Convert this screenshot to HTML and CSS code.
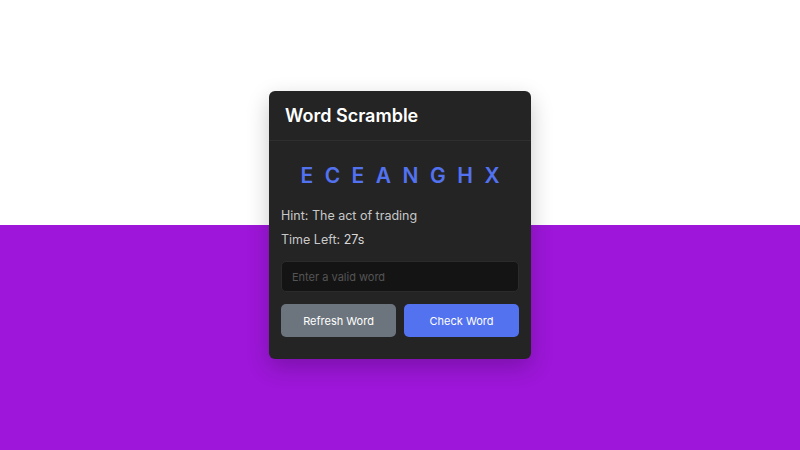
FILE: index.html
```html
<!DOCTYPE html>
<html>
<head>
<meta charset="utf-8">
<link rel="stylesheet" href="styles.css">
</head>
<body>
<div class="card">
  <h2 class="title">Word Scramble</h2>
  <div class="content">
    <p class="word">ECEANGHX</p>
    <div class="details">
      <p>Hint: <span>The act of trading</span></p>
      <p>Time Left: <b>27s</b></p>
    </div>
    <input class="field" type="text" placeholder="Enter a valid word">
    <div class="buttons">
      <button class="btn refresh">Refresh Word</button>
      <button class="btn check">Check Word</button>
    </div>
  </div>
</div>
</body>
</html>
```
FILE: styles.css
```css
* { box-sizing: border-box; margin: 0; padding: 0; }
html, body { height: 100%; }
body {
  font-family: "Inter", "Open Sans", sans-serif;
  background: linear-gradient(to bottom, #ffffff 50%, #9d16d9 50%);
  display: flex;
  align-items: center;
  justify-content: center;
}
.card {
  width: 262px;
  background: #242424;
  border-radius: 6px;
  box-shadow: 0 8px 22px rgba(0,0,0,0.22);
}
.title {
  height: 50px;
  display: flex;
  align-items: center;
  padding: 0 16px;
  font-size: 18px;
  font-weight: 600;
  color: #fff;
  border-bottom: 1px solid #2f2f2f;
}
.content {
  padding: 20px 12px 22px;
}
.word {
  text-align: center;
  font-size: 21px;
  font-weight: 600;
  letter-spacing: 11.5px;
  margin-right: -11.5px;
  color: #5372f0;
  line-height: 30px;
}
.details {
  margin-top: 13px;
  color: #c8c8c8;
  font-size: 12.5px;
}
.details p { line-height: 24px; }
.details b { font-weight: 400; color: #d8d8d8; }
.field {
  display: block;
  width: 100%;
  height: 31px;
  margin-top: 9px;
  padding: 0 10px;
  background: #141414;
  border: 1px solid #2b2b2b;
  border-radius: 5px;
  color: #ddd;
  font-family: inherit;
  font-size: 11px;
  outline: none;
}
.field::placeholder { color: #555; }
.buttons {
  display: flex;
  gap: 8px;
  margin-top: 12px;
}
.btn {
  flex: 1;
  height: 33px;
  border: none;
  border-radius: 5px;
  color: #fff;
  font-family: inherit;
  font-size: 11px;
}
.refresh { background: #6c757d; }
.check { background: #5372f0; }
```
